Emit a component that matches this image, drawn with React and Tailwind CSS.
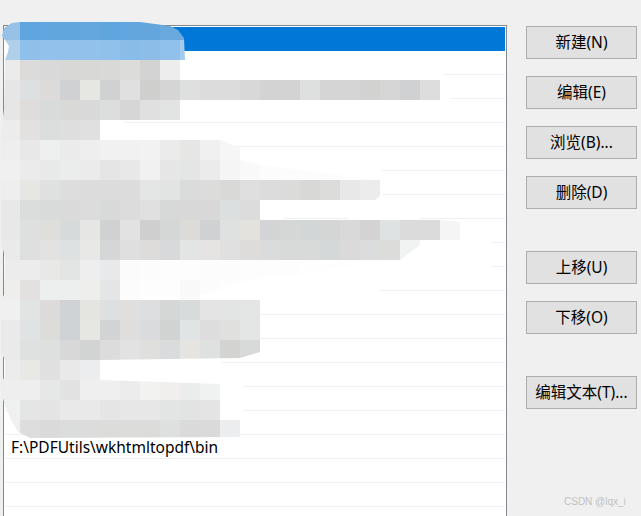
const CJK = "font-['Noto_Sans','Noto_Sans_CJK_SC',sans-serif]";

const buttonGroups = [
  { cls: "mt-[1px]", items: ["新建(N)", "编辑(E)", "浏览(B)...", "删除(D)"] },
  { cls: "mt-[42px]", items: ["上移(U)", "下移(O)"] },
  { cls: "mt-[42px]", items: ["编辑文本(T)..."] },
];

const mosaic = [
  ["97c1e6","5fa5df","62a6df","62a6de","64a7df","5fa5de","62a6df","62a6dd","6aa9dd","6ea9dc"],
  ["b0cfe9","8fc0ec","92c1ec","92c2ec","92c2ec","90c1ec","8abcea","8cbde9","90c1ec","a4cbef"],
  ["ebebeb","dcdbd9","d8d9d8","d8d8d7","d8d8d7","d9d9d8","dcdcda","d2d3d2","ededed"],
  ["e6e6e6","dde0e0","dcdbda","cfd1d3","e6e6e3","cfd1d3","e0e0e0","cfcfcd","d5d5d5","dde0df","dcdcdc","dcdcdc","d8d8d8","d2d3d2","d2d3d2","dde0df","d4d5d4","d4d5d4","d2d3d1","d6d6d6","cfd1d3","dddddd"],
  ["e6e6e6","dedddb","d9dbda","d9d9d7","d9d9d9","dcdddd","d6d6d6","e0e0e0","e2e3e3"],
  ["ececec","e2e1df","dcdedd","dedede","e0e0e0","fcfcfc"],
  ["eeeeee","e8e8e8","eef0ef","ebebeb","eeeeee","f1f1f1","f1f1f1","f2f2f2","ebebeb","e6e6e4","f0f0f0","f5f6f5"],
  ["f0f0f0","ebebeb","e8e9e9","ebecec","ebebeb","e5e5e5","e8e8e8","f0f1f0","e6e6e6","e4e6e6","ebebeb","f5f5f5","f9f9f9","fcfcfc","fcfcfc","fcfcfc","fcfcfc","fdfdfd","fdfdfd"],
  ["eeeeee","e6e6e2","dfe1e1","dcdddc","dcdcdc","dcdcdc","dcdcdc","e4e6e5","e2e3e3","dadcdc","dcdcdb","d9d9d8","dfdfdf","dcdcdc","dbdbda","d8d8d7","dcdcda","e8e8e8","ececec"],
  ["e8e8e8","dbdcdc","d9dbdb","dadada","dcdcdc","d8d9d9","dcdcdc","e0e0e0","d7d8d8","d8d8d8","d8d8d8","dcdfdf","dcdcdc"],
  ["e8e8e8","dde0df","dededb","d6dada","e6e6e4","cfd1d3","e2e2e2","cfcfcf","d5d6d6","dcdbd8","d0d1d3","dfe0e0","e3e2dd","d2d4d6","d5d6d6","d3d6d7","d3d6d5","d9d9d9","d3d3d3","dfe2e2","dbdbdb","dbdbdb","f5f5f5"],
  ["eaeaea","dedfdf","e2e2e0","dee1e1","e8e8e6","d4d6d8","dfdfdf","dddcda","d8d9db","e3e5e5","e5e4e2","e0e0e0","dddcda","d9dbdd","d8d9d9","d8d9d9","d5d8d8","dadada","dadcdd","dcdcda","f1f3f2"],
  ["ececec","ececec","e8e8e6","e2e5e4","eeeeee","e8e9ea","fbfbfb","fcfcfc","fdfdfd","fdfdfd","fcfcfc","fcfcfc","fdfdfd","fdfdfd","fdfdfd","fefefe","fefefe","fefefe","fefefe"],
  ["eeeeec","e2e1df","ecefee","ecefee","eeeeec","e3e5e6","fcfcfc","fdfdfd","fdfdfd","f9f9f9","fcfcfc","fdfdfd","fdfdfd"],
  ["f0f0f0","e2e3e3","dcdbd9","d0d3d5","e4e4e1","dce0e0","e0dfdd","dcdee0","d5d6d6","d8dbdb","e4e4e4","e3e4e4","e3e6e5"],
  ["eaeaea","e0e3e3","dcdcd9","d0d3d5","e6e6e2","d1d3d5","dfdedc","dadbdd","d0d3d2","e1e4e4","dcdddc","e0e0df","e3e6e5"],
  ["eaeaea","dfe1e1","dee0e0","d8d8d8","d2d3d3","dcdcdc","e2e2e2","dfdfdd","dadbdd","e6e4e1","dfe1e1","d3d3d1","d8dada"],
  ["ececec","e8e8e5","e0e0e0","e9e9e9","ecedee"],
  ["eeeeee","eeeeee","e6e7e7","e2e2e2","efefef","efefef","ececec","f2f2f0","f0efed","ebeded","f0f2f1"],
  ["eff1f1","e4e5e5","e4e4e4","e9e9e9","e9e9e9","e5e5e5","e7e7e7","e7e7e7","e3e4e4","e2e3e3","e4e4e4"],
  ["f0f0f0","dddddd","dadada","dbdcdc","dcdcdc","dcdcda","dcdcda","dcdcda","dee0e0","dadada","dadada","ecedee"],
];

const outline =
  "2,36 4,28 12,23 20,22 140,22 170,26 178,30 184,38 185,60 180,60 180,80 440,80 440,100 180,100 180,120 100,120 100,140 220,140 240,148 240,160 260,165 380,180 380,196 375,200 260,200 260,220 440,220 460,222 460,240 420,240 420,245 400,260 250,280 200,295 200,300 260,300 260,352 240,358 100,360 100,380 220,384 220,420 240,420 240,437 30,438 18,432 10,418 5,405 1,392 1,380 5,378 5,360 1,352 1,300 4,295 5,258 1,240 1,130 4,110 5,60 8,52 9,46 5,40";

function Smudge() {
  return (
    <svg width="641" height="516" viewBox="0 0 641 516" className="absolute left-0 top-0">
      <defs>
        <clipPath id="smudge-outline">
          <polygon points={outline} />
        </clipPath>
      </defs>
      <g fill="#ffffff">
        <rect x="4" y="38" width="8" height="14" />
        <rect x="180" y="60" width="264" height="20" />
        <rect x="180" y="80" width="270" height="20" />
        <rect x="100" y="100" width="25" height="24" />
        <rect x="100" y="124" width="135" height="24" />
        <rect x="260" y="160" width="122" height="40" />
        <rect x="260" y="200" width="23" height="20" />
        <rect x="348" y="214" width="72" height="8" />
        <rect x="440" y="236" width="52" height="8" />
        <rect x="260" y="240" width="232" height="30" />
        <rect x="120" y="262" width="260" height="30" />
        <rect x="100" y="358" width="122" height="6" />
        <rect x="100" y="370" width="143" height="20" />
        <rect x="200" y="384" width="43" height="30" />
        <rect x="20" y="430" width="220" height="4" />
      </g>
      <g clipPath="url(#smudge-outline)">
        {mosaic.map((row, r) =>
          row.map((c, i) => (
            <rect
              key={`${r}-${i}`}
              x={i * 20}
              y={r === 0 ? 22 : 20 + r * 20}
              width={r < 2 && i === 9 ? 25 : 20}
              height={r === 0 ? 18 : 20}
              fill={`#${c}`}
            />
          ))
        )}
      </g>
    </svg>
  );
}

export default function App() {
  const rows = Array.from({ length: 20 });
  return (
    <div className={`relative flex w-[641px] h-[516px] overflow-hidden bg-[#f0f0f0] pl-[3px] pt-[25px] ${CJK}`}>
      <div className="w-[504px] h-[491px] shrink-0 overflow-hidden border border-b-0 border-[#828790] bg-white pl-[1px] pr-[1px] pt-[1px]">
        <div className="h-[24px] bg-[#0078d7]" />
        {rows.map((_, i) => (
          <div
            key={i}
            className="h-[24px] border-b border-[#f0f0f0] pl-[6px] text-[15.5px] leading-[25px] text-black whitespace-nowrap"
          >
            {i === 16 ? "F:\\PDFUtils\\wkhtmltopdf\\bin" : ""}
          </div>
        ))}
      </div>
      <div className="ml-[19px] flex flex-col">
        {buttonGroups.map((g, gi) => (
          <div key={gi} className={`flex flex-col gap-[17px] ${g.cls}`}>
            {g.items.map((t) => (
              <button
                key={t}
                className="h-[33px] w-[111px] border border-[#adadad] bg-[#e1e1e1] pb-[2px] text-center text-[15.5px] leading-[28px] text-black whitespace-nowrap"
              >
                {t}
              </button>
            ))}
          </div>
        ))}
      </div>
      <Smudge />
      <span className="absolute left-[564px] top-[495px] text-[10px] leading-[13px] text-[#c0c0c0] font-['Liberation_Sans',sans-serif]">
        CSDN @lqx_i
      </span>
    </div>
  );
}
